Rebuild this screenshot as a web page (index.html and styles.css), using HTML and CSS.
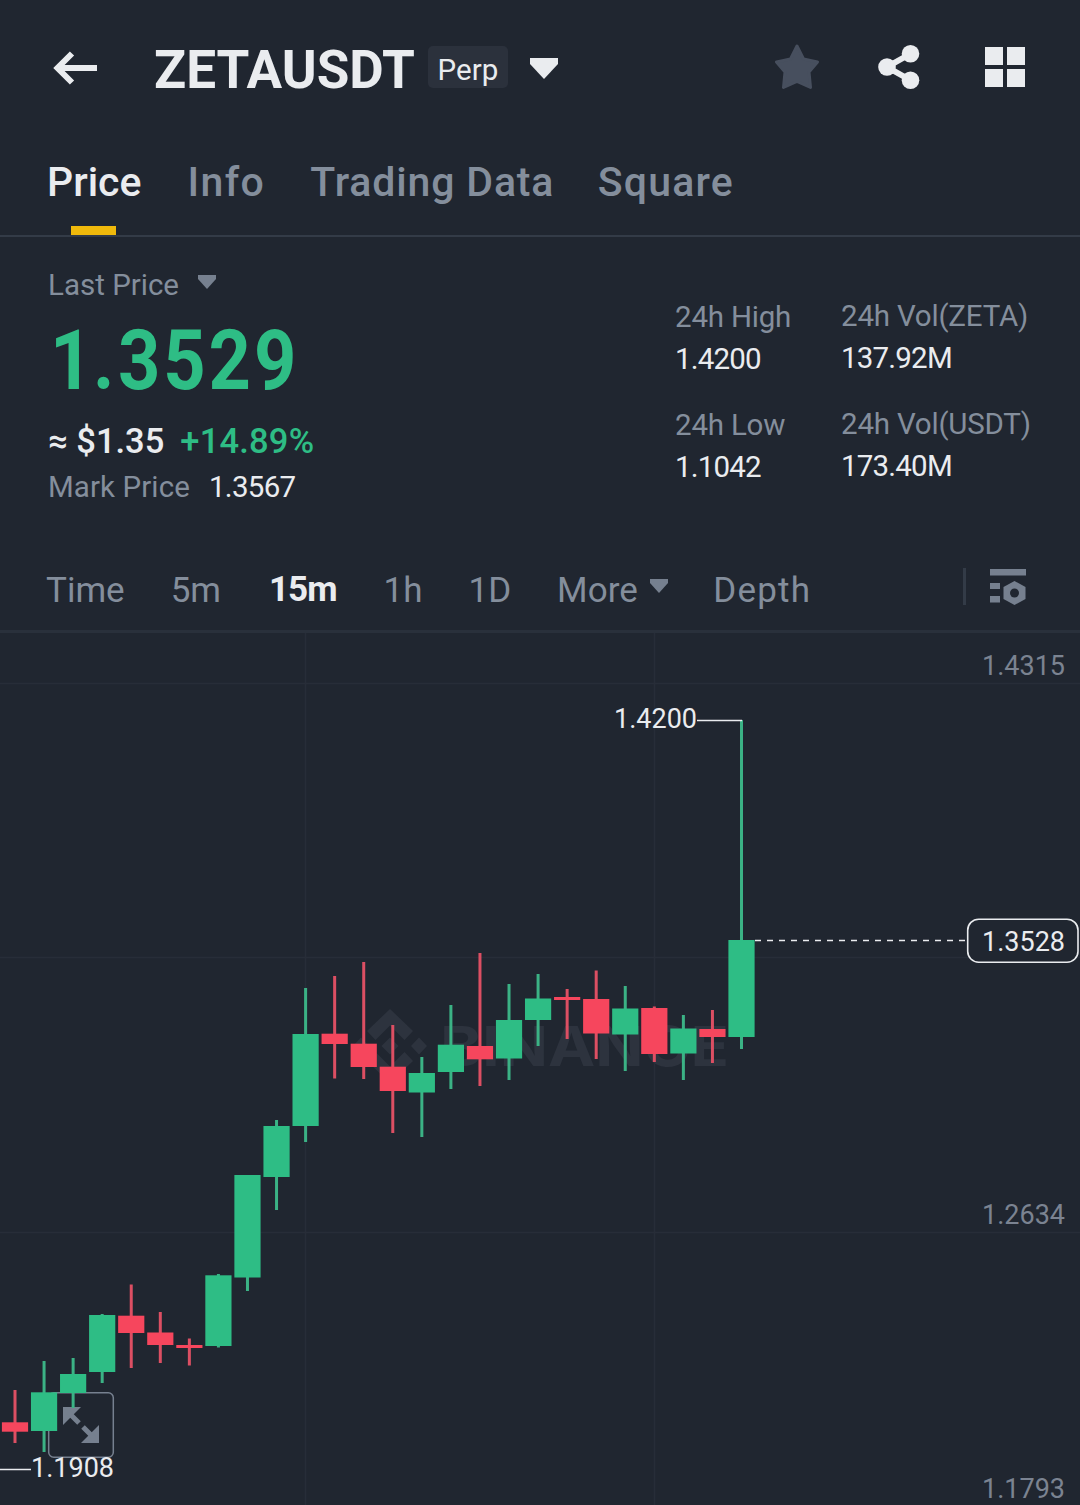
FILE: index.html
```html
<!DOCTYPE html>
<html lang="en">
<head>
  <meta charset="UTF-8" />
  <meta name="viewport" content="width=device-width, initial-scale=1.0"/>
  <title>ZETAUSDT Perp</title>
  <link rel="stylesheet" href="styles.css">
</head>
<body>
  <!-- Top Bar -->
  <header class="top-bar">
    <svg class="back-icon" width="44" height="34" viewBox="0 0 44 34">
      <path d="M4 17H44M19 2.5L4.5 17L19 31.5" fill="none" stroke="#eaecef" stroke-width="6"/>
    </svg>
    <h1 class="pair">ZETAUSDT</h1>
    <span class="badge">Perp</span>
    <svg class="pair-caret" width="28" height="21" viewBox="0 0 28 21">
      <path d="M0 0H28V6L14 21L0 6Z" fill="#eaecef"/>
    </svg>
    <div class="actions">
      <svg width="46" height="46" viewBox="0 0 46 46">
        <path d="M23 2L29.5 15L43.5 18L35 28L36.5 43.500L23 37.5L9.5 43.500L11 28L2.500 18L16.5 15Z" fill="#474f5e" stroke="#474f5e" stroke-width="3" stroke-linejoin="round"/>
      </svg>
      <svg class="share-icon" width="42" height="44" viewBox="0 0 42 44">
        <path d="M33 8.5L9 22L33 35.5" fill="none" stroke="#eaecef" stroke-width="6"/>
        <circle cx="9" cy="22" r="8.8" fill="#eaecef"/>
        <circle cx="32.5" cy="8.8" r="8.8" fill="#eaecef"/>
        <circle cx="32.5" cy="35.2" r="8.8" fill="#eaecef"/>
      </svg>
      <svg class="grid-icon" width="40" height="40" viewBox="0 0 40 40">
        <path d="M0 0H18V18H0ZM22 0H40V18H22ZM0 22H18V40H0ZM22 22H40V40H22Z" fill="#eaecef"/>
      </svg>
    </div>
  </header>

  <!-- Tabs -->
  <nav class="tabs">
    <a class="tab active">Price</a>
    <a class="tab tab-info">Info</a>
    <a class="tab tab-data">Trading Data</a>
    <a class="tab tab-square">Square</a>
  </nav>

  <!-- Price Summary -->
  <section class="summary">
    <div class="price-box">
      <div class="last-label">
        <span>Last Price</span>
        <svg class="last-caret" width="18" height="14" viewBox="0 0 18 14"><path d="M0 0H18V4L9 14L0 4Z" fill="#76808f"/></svg>
      </div>
      <div class="last-price"><span class="first">1</span><span class="dot">.</span><span>3</span><span>5</span><span>2</span><span>9</span></div>
      <div class="change-row">
        <span class="fiat">≈ $1.35</span>
        <span class="change">+14.89%</span>
      </div>
      <div class="mark-row">
        <span class="mark-label">Mark Price</span>
        <span class="mark-value">1.3567</span>
      </div>
    </div>
    <div class="stats">
      <div class="stats-col col-price">
        <div class="stat"><span class="stat-label">24h High</span><span class="stat-value">1.4200</span></div>
        <div class="stat"><span class="stat-label">24h Low</span><span class="stat-value">1.1042</span></div>
      </div>
      <div class="stats-col col-vol">
        <div class="stat"><span class="stat-label">24h Vol(ZETA)</span><span class="stat-value">137.92M</span></div>
        <div class="stat"><span class="stat-label">24h Vol(USDT)</span><span class="stat-value">173.40M</span></div>
      </div>
    </div>
  </section>

  <!-- Intervals -->
  <div class="intervals">
    <span>Time</span>
    <span>5m</span>
    <span class="selected">15m</span>
    <span>1h</span>
    <span>1D</span>
    <span class="more">More</span>
    <svg class="more-caret" width="18" height="14" viewBox="0 0 18 14"><path d="M0 0H18V4L9 14L0 4Z" fill="#76808f"/></svg>
    <span class="depth">Depth</span>
    <div class="settings">
      <svg width="36" height="37" viewBox="0 0 36 37">
        <path d="M0 0H36V6.5H0ZM0 14H10V20H0ZM0 27H10V33.5H0Z" fill="#76808f"/>
        <path d="M24.5 12L35.5 18V30L24.5 36L13.5 30V18Z" fill="#76808f"/>
        <circle cx="24.5" cy="24" r="4.5" fill="#202630"/>
      </svg>
    </div>
  </div>

  <!-- Candlestick Chart -->
  <svg class="chart" width="1080" height="872" viewBox="0 633 1080 872">
    <g class="grid-lines">
      <path d="M0 683.5H1080M0 957.5H1080M0 1232.5H1080M305.5 633V1505M654.5 633V1505"/>
    </g>
    <g class="watermark">
      <path d="M390 1009L413 1031L404.5 1040L390 1025.5L375.5 1040L367 1031Z"/>
      <path d="M390 1083L413 1061L404.5 1052L390 1066.5L375.5 1052L367 1061Z"/>
      <path d="M390 1037.5L398.5 1046L390 1054.5L381.5 1046ZM419 1037.5L427 1046L419 1054.5L411 1046ZM361 1037.5L369 1046L361 1054.5L353 1046Z"/>
      <text x="440" y="1066" textLength="289" lengthAdjust="spacingAndGlyphs">BINANCE</text>
    </g>
    <g class="expand">
      <rect x="48.7" y="1392.7" width="64.6" height="64.6" rx="5"/>
      <path d="M63 1407H81L63 1425ZM99 1443H81L99 1425Z"/>
      <path class="expand-stem" d="M68 1412L79 1423M83 1427L94 1438"/>
    </g>
    <g id="candles"></g>
    <g class="marks">
      <path d="M697 720.5H742M0 1469.5H31"/>
      <path d="M755 940.5H966" stroke-dasharray="6 6"/>
      <rect x="967.7" y="919.2" width="110.3" height="43" rx="11"/>
    </g>
    <g class="mark-text">
      <text x="614" y="728">1.4200</text>
      <text x="31" y="1477">1.1908</text>
      <text x="982" y="951">1.3528</text>
    </g>
    <g class="axis-text">
      <text x="982" y="675">1.4315</text>
      <text x="982" y="1224">1.2634</text>
      <text x="982" y="1498">1.1793</text>
    </g>
  </svg>

  <script>
    // color, body top, body bottom, wick top, wick bottom
    const candles = [
      ["red", 1422.3, 1431.7, 1390, 1443],
      ["green", 1392.3, 1431, 1361, 1452],
      ["green", 1374, 1393, 1358, 1408],
      ["green", 1315, 1372, 1314, 1383],
      ["red", 1315.7, 1333, 1284.5, 1368],
      ["red", 1332.5, 1345, 1312, 1363],
      ["red", 1345, 1348, 1338.5, 1365.5],
      ["green", 1275.3, 1346, 1274, 1347.5],
      ["green", 1175, 1277.5, 1175, 1291],
      ["green", 1126, 1177, 1120, 1210],
      ["green", 1034, 1126, 988, 1142],
      ["red", 1033.7, 1044, 976, 1078.5],
      ["red", 1043.7, 1067, 962, 1079],
      ["red", 1066.7, 1091, 1025, 1133],
      ["green", 1073, 1092.5, 1057, 1137],
      ["green", 1044.7, 1072, 1005, 1089],
      ["red", 1046, 1059.3, 953, 1086],
      ["green", 1020, 1058.5, 984, 1080],
      ["green", 998.5, 1020, 974, 1046],
      ["red", 997, 1000, 989, 1039],
      ["red", 999, 1033.5, 970.5, 1059],
      ["green", 1008.5, 1034.5, 986, 1071],
      ["red", 1008, 1054, 1006.5, 1062],
      ["green", 1028.5, 1053.5, 1015, 1080],
      ["red", 1029, 1037, 1010, 1063],
      ["green", 940, 1037, 720, 1049]
    ];

    let svg = "";
    candles.forEach(([color, top, bottom, high, low], i) => {
      const x = 15 + i * 29.06;
      svg += `<rect class="wick ${color}" x="${x - 1.5}" y="${high}" width="3" height="${low - high}"/>`;
      svg += `<rect class="${color}" x="${x - 13.1}" y="${top}" width="26.2" height="${bottom - top}"/>`;
    });
    document.getElementById("candles").innerHTML = svg;
  </script>
</body>
</html>
```

FILE: styles.css
```css
/* ---------------------------------------
   1. RESET & BASIC STYLING
--------------------------------------- */
* {
  margin: 0;
  padding: 0;
  box-sizing: border-box;
}

body {
  width: 1080px;
  height: 1505px;
  overflow: hidden;
  background: #202630;
  color: #eaecef;
  font-family: Roboto, 'Liberation Sans', sans-serif;
}

svg {
  display: block;
  flex-shrink: 0;
}

/* ---------------------------------------
   2. TOP BAR
--------------------------------------- */
.top-bar {
  display: flex;
  align-items: center;
  height: 136px;
  padding: 0 55px 0 53px;
}
.pair {
  margin: 4px 0 0 57px;
  font-size: 53px;
  font-weight: 700;
  line-height: 60px;
}
.badge {
  width: 80px;
  height: 42px;
  margin: -2px 0 0 13px;
  border-radius: 5px;
  background: #2b313c;
  font-size: 29.5px;
  line-height: 48px;
  text-align: center;
}
.pair-caret {
  margin-left: 22px;
}
.actions {
  display: flex;
  align-items: center;
  margin: -2px 0 0 auto;
}
.share-icon {
  margin-left: 58px;
}
.grid-icon {
  margin-left: 65px;
}

/* ---------------------------------------
   3. TABS
--------------------------------------- */
.tabs {
  display: flex;
  height: 101px;
  padding-left: 47px;
  border-bottom: 2px solid #333b47;
  font-size: 41px;
  font-weight: 500;
  line-height: 92px;
  color: #848e9c;
}
.tab {
  margin-right: 46px;
  white-space: nowrap;
}
.tab.active {
  position: relative;
  color: #eaecef;
}
.tab.active::after {
  content: "";
  position: absolute;
  left: 24px;
  bottom: 0;
  width: 45px;
  height: 9px;
  background: #f0b90b;
}
.tab-info {
  margin-right: 45px;
  letter-spacing: 1.4px;
}
.tab-data {
  margin-right: 43.5px;
  letter-spacing: 0.85px;
}
.tab-square {
  letter-spacing: 1.2px;
}

/* ---------------------------------------
   4. PRICE SUMMARY
--------------------------------------- */
.summary {
  display: flex;
  height: 309px;
  padding: 28px 0 0 48px;
  font-size: 29.5px;
}
.price-box {
  width: 627px;
}
.last-label {
  display: flex;
  align-items: center;
  gap: 19px;
  height: 40px;
  color: #848e9c;
}
.last-caret {
  margin-top: -6px;
}
/* digits are set narrow, one per cell */
.last-price {
  display: flex;
  height: 111px;
  margin-left: -5px;
  font-size: 84px;
  font-weight: 700;
  line-height: 112px;
  color: #2ebd85;
  transform: scaleX(0.88);
  transform-origin: left;
}
.last-price span {
  width: 51.5px;
  text-align: center;
}
.last-price .first {
  padding-left: 8px;
}
.last-price .dot {
  width: 32px;
  padding-left: 3px;
}
.change-row {
  display: flex;
  height: 51px;
  font-size: 34.5px;
  font-weight: 500;
  line-height: 50px;
}
.change {
  margin-left: 16px;
  letter-spacing: 0.2px;
  color: #2ebd85;
}
.mark-row {
  display: flex;
  line-height: 40px;
}
.mark-label {
  letter-spacing: 0.1px;
  color: #848e9c;
}
.mark-value {
  margin-left: 19px;
  letter-spacing: -0.7px;
}
.stats {
  display: flex;
}
.stats-col {
  display: flex;
  flex-direction: column;
  padding-top: 31px;
}
.col-price {
  width: 166px;
}
.col-vol {
  padding-top: 30px;
}
.stat {
  height: 108px;
}
.stat-label,
.stat-value {
  display: table;
  line-height: 42px;
  white-space: nowrap;
}
.stat-label {
  letter-spacing: -0.2px;
  color: #848e9c;
}
.stat-value {
  letter-spacing: -0.8px;
}

/* ---------------------------------------
   5. INTERVALS
--------------------------------------- */
.intervals {
  display: flex;
  height: 87px;
  padding-left: 46px;
  border-bottom: 3px solid #29303b;
  font-size: 35px;
  line-height: 89px;
  color: #848e9c;
}
.intervals span {
  margin-right: 46px;
}
.intervals .selected {
  margin: -1px 47px 0 2px;
  color: #eaecef;
  font-weight: 700;
  letter-spacing: -1px;
}
.intervals .more {
  margin-right: 12px;
}
.more-caret {
  margin: 33px 45.5px 0 0;
}
.depth {
  letter-spacing: 1.2px;
}
.settings {
  margin: 22px 54px 0 auto;
  padding: 1px 0 0 24px;
  height: 37px;
  border-left: 3px solid #333b47;
}

/* ---------------------------------------
   6. CHART
--------------------------------------- */
.grid-lines {
  stroke: #272d38;
  stroke-width: 1.5;
}
.watermark {
  fill: #2d333e;
  font-family: Inter, Roboto, sans-serif;
  font-size: 55px;
  font-weight: 700;
}
.expand rect {
  fill: none;
  stroke: #76808f;
  stroke-width: 1.5;
}
.expand path {
  fill: #76808f;
}
.expand .expand-stem {
  stroke: #76808f;
  stroke-width: 5;
}
.green {
  fill: #2ebd85;
}
.red {
  fill: #f6465d;
}
.wick.green {
  fill: #3bb285;
}
.wick.red {
  fill: #dc4f63;
}
.marks {
  fill: #202630;
  stroke: #eaecef;
  stroke-width: 1.6;
}
.mark-text {
  fill: #eaecef;
  font-size: 27px;
}
.axis-text {
  fill: #7b8391;
  font-size: 27px;
}
```
